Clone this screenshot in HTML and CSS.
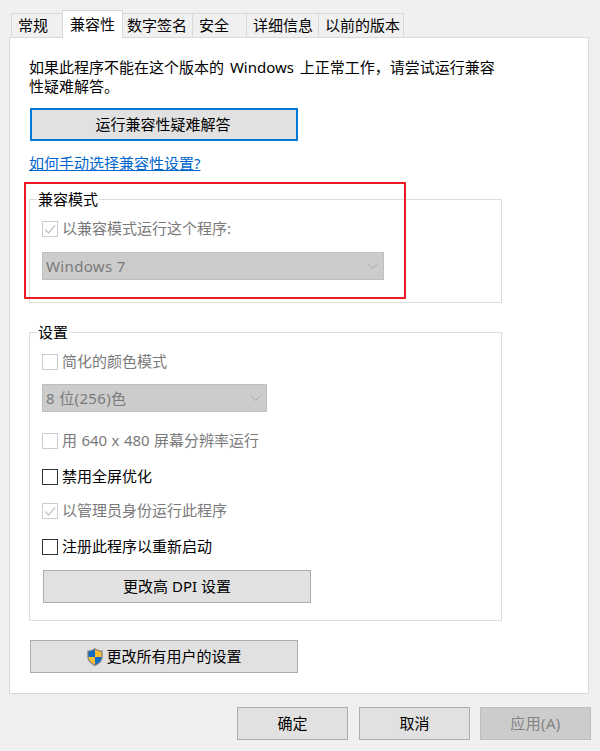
FILE: index.html
```html
<!DOCTYPE html>
<html lang="zh-CN">
<head>
    <meta charset="UTF-8">
    <meta name="viewport" content="width=device-width, initial-scale=1.0">
    <title>兼容性</title>
    <link rel="stylesheet" href="styles.css">
</head>
<body>

<div class="dialog">
    <!-- Tabs -->
    <div class="tabs">
        <div class="tab">常规</div>
        <div class="tab active">兼容性</div>
        <div class="tab">数字签名</div>
        <div class="tab">安全</div>
        <div class="tab">详细信息</div>
        <div class="tab">以前的版本</div>
    </div>

    <div class="panel">
        <p class="intro">如果此程序不能在这个版本的 Windows 上正常工作，请尝试运行兼容性疑难解答。</p>
        <button class="btn btn-wide btn-focus">运行兼容性疑难解答</button>
        <a class="help-link" href="#">如何手动选择兼容性设置?</a>

        <!-- Compatibility mode -->
        <fieldset class="group group-mode">
            <legend>兼容模式</legend>
            <div class="row row-first disabled">
                <span class="check">
                    <svg width="14" height="14" viewBox="0 0 14 14"><path d="M2 7.5 L5.5 11 L12 3.5" fill="none" stroke="#c4c4c4" stroke-width="1.3"/></svg>
                </span>
                <span class="label">以兼容模式运行这个程序:</span>
            </div>
            <div class="dropdown dropdown-long">
                <span class="latin">Windows 7</span>
                <svg class="chevron" width="11" height="6" viewBox="0 0 11 6"><path d="M0.5 0.5 L5.5 5.5 L10.5 0.5" fill="none" stroke="#a8a8a8"/></svg>
            </div>
        </fieldset>

        <!-- Settings -->
        <fieldset class="group group-settings">
            <legend>设置</legend>
            <div class="row row-first disabled">
                <span class="check"></span>
                <span class="label">简化的颜色模式</span>
            </div>
            <div class="dropdown dropdown-short">
                <span class="latin">8 位(256)色</span>
                <svg class="chevron" width="11" height="6" viewBox="0 0 11 6"><path d="M0.5 0.5 L5.5 5.5 L10.5 0.5" fill="none" stroke="#a8a8a8"/></svg>
            </div>
            <div class="row row-res disabled">
                <span class="check"></span>
                <span class="label spaced">用 640 x 480 屏幕分辨率运行</span>
            </div>
            <div class="row row-fullscreen">
                <span class="check"></span>
                <span class="label">禁用全屏优化</span>
            </div>
            <div class="row row-admin disabled">
                <span class="check">
                    <svg width="14" height="14" viewBox="0 0 14 14"><path d="M2 7.5 L5.5 11 L12 3.5" fill="none" stroke="#c4c4c4" stroke-width="1.3"/></svg>
                </span>
                <span class="label">以管理员身份运行此程序</span>
            </div>
            <div class="row row-restart">
                <span class="check"></span>
                <span class="label">注册此程序以重新启动</span>
            </div>
            <button class="btn btn-wide btn-dpi">更改高 DPI 设置</button>
        </fieldset>

        <button class="btn btn-wide btn-all">
            <svg class="shield" width="18" height="20" viewBox="0 0 20 21" preserveAspectRatio="none">
                <path d="M10 1 C7.5 3 4.5 3.6 1.5 3.8 V10 C1.5 14.5 5 18 10 20 C15 18 18.5 14.5 18.5 10 V3.8 C15.5 3.6 12.5 3 10 1 Z" fill="#7f7f7f"/>
                <path d="M10 2.5 C7.8 4 5.2 4.7 2.8 4.9 V10.5 H10 Z" fill="#0f6cc4"/>
                <path d="M10 2.5 C12.2 4 14.8 4.7 17.2 4.9 V10.5 H10 Z" fill="#fbbc34"/>
                <path d="M2.8 10.5 H10 V18.5 C6 17 3 14.2 2.8 10.5 Z" fill="#fbbc34"/>
                <path d="M17.2 10.5 H10 V18.5 C14 17 17 14.2 17.2 10.5 Z" fill="#0f6cc4"/>
            </svg><span>更改所有用户的设置</span>
        </button>
    </div>

    <div class="footer">
        <button class="btn btn-footer">确定</button>
        <button class="btn btn-footer">取消</button>
        <button class="btn btn-footer btn-disabled">应用(A)</button>
    </div>

    <!-- Red annotation drawn over the screenshot -->
    <div class="highlight"></div>
</div>

</body>
</html>
```

FILE: styles.css
```css
* {
    box-sizing: border-box;
}

body {
    margin: 0;
    background-color: #f0f0f0;
    color: #000;
    font-family: "Noto Sans", "Noto Sans CJK SC", sans-serif;
    font-size: 15px;
}

/* Latin runs in the reference are a bit wider than Noto at 15px */
.latin {
    letter-spacing: 0.35px;
}

.spaced {
    word-spacing: 0.5px;
}

.dialog {
    position: relative;
    width: 600px;
    height: 751px;
    padding-top: 10px;
    overflow: hidden;
}

/* Tabs */
.tabs {
    display: flex;
    align-items: flex-start;
    height: 28px;
    margin-left: 11px;
    position: relative;
    z-index: 1;
}

.tab {
    height: 24px;
    margin-top: 3px;
    padding-left: 7px;
    line-height: 23px;
    white-space: nowrap;
    border: 1px solid #d9d9d9;
    border-left-width: 0;
    border-bottom: none;
    color: #000;
}

.tab:nth-child(1) { width: 52px; border-left-width: 1px; padding-left: 6px; }
.tab:nth-child(2) { width: 61px; }
.tab:nth-child(3) { width: 70px; padding-left: 4px; }
.tab:nth-child(4) { width: 54px; padding-left: 6px; }
.tab:nth-child(5) { width: 72px; padding-left: 6px; }
.tab:nth-child(6) { width: 85px; padding-left: 6px; }

.tab.active {
    height: 28px;
    margin-top: 0;
    line-height: 26px;
    background-color: #fff;
    border-left-width: 1px;
    margin-left: -1px;
}

/* Main panel */
.panel {
    width: 580px;
    height: 657px;
    margin-top: -1px;
    margin-left: 9px;
    padding: 20px 0 0 19px;
    background-color: #fff;
    border: 1px solid #d9d9d9;
}

.intro {
    width: 472px;
    margin: 0;
    line-height: 19px;
    word-spacing: 2px;
}

.btn {
    display: block;
    height: 33px;
    padding: 0 0 2px;
    background-color: #e1e1e1;
    border: 1px solid #adadad;
    color: #000;
    font-family: inherit;
    font-size: 15px;
}

.btn-wide {
    width: 268px;
    margin-left: 1px;
}

.btn-focus {
    margin-top: 12px;
    padding-right: 2px;
    border: 2px solid #0078d7;
}

.help-link {
    display: block;
    margin-top: 12px;
    line-height: 20px;
    color: #0066cc;
}

/* Group boxes */
.group {
    width: 473px;
    margin: 0;
    padding: 0 12px;
    border: 1px solid #dcdcdc;
}

.group legend {
    margin-left: -5px;
    padding: 0 1px 1px;
    line-height: 18px;
}

.group-mode {
    margin-top: 17px;
    padding-bottom: 22px;
}

.group-settings {
    margin-top: 20px;
    padding-bottom: 17px;
}

.row {
    display: flex;
    align-items: center;
    gap: 4px;
    height: 20px;
}

/* glyphs sit low in the line box, lift them to the middle of the box */
.label {
    padding-bottom: 3px;
}

.row.disabled {
    color: #7a7a7a;
}

.row-first { margin-top: 10px; }
.row-res { margin-top: 19px; }
.row-fullscreen { margin-top: 16px; }
.row-admin { margin-top: 14px; }
.row-restart { margin-top: 16px; }

.check {
    display: flex;
    align-items: center;
    justify-content: center;
    flex: none;
    width: 16px;
    height: 16px;
    border: 1px solid #333;
    background-color: #fff;
}

.disabled .check {
    border-color: #cccccc;
}

.dropdown {
    display: flex;
    align-items: center;
    justify-content: space-between;
    height: 28px;
    padding: 0 5px 1px 3px;
    background-color: #cccccc;
    border: 1px solid #bfbfbf;
    color: #7a7a7a;
}

.dropdown-long {
    width: 342px;
    margin-top: 13px;
}

.dropdown-short {
    width: 225px;
    margin-top: 12px;
}

.btn-dpi {
    margin-top: 13px;
}

.btn-all {
    display: flex;
    align-items: center;
    justify-content: center;
    margin-top: 19px;
    padding: 0;
}

.btn-all span {
    padding-bottom: 2px;
}

.shield {
    flex: none;
    margin-right: 2px;
}

/* Bottom buttons */
.footer {
    display: flex;
    gap: 11px;
    margin-top: 13px;
    margin-left: 237px;
}

.btn-footer {
    width: 111px;
}

.btn-disabled {
    margin-left: -1px;
    background-color: #cccccc;
    border-color: #bfbfbf;
    color: #838383;
    letter-spacing: 0.35px;
}

.highlight {
    position: absolute;
    left: 24px;
    top: 182px;
    width: 382px;
    height: 117px;
    border: 2px solid #ed1c24;
}
```
